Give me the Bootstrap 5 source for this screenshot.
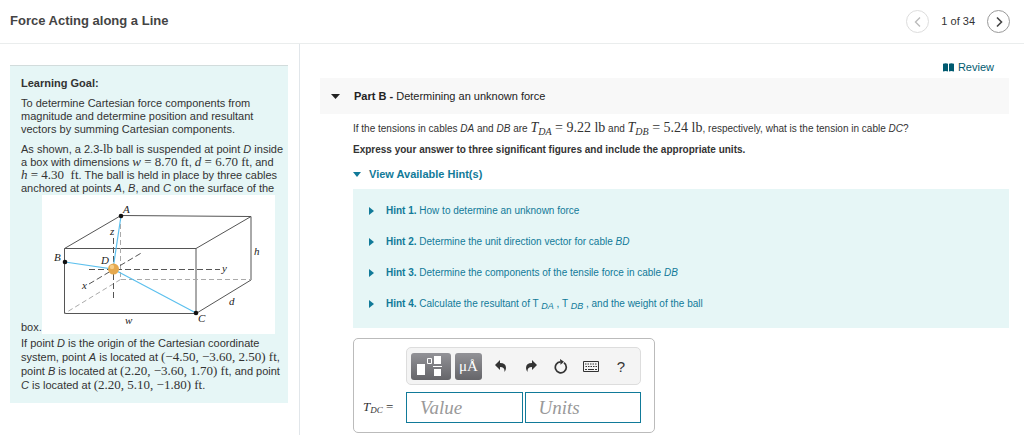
<!DOCTYPE html>
<html lang="en">
<head>
<meta charset="utf-8">
<meta name="viewport" content="width=device-width, initial-scale=1">
<title>Force Acting along a Line</title>
<link href="https://cdn.jsdelivr.net/npm/bootstrap@5.3.0/dist/css/bootstrap.min.css" rel="stylesheet">
<style>
body { font-family: "Liberation Sans", Arial, sans-serif; font-size: 11px; line-height: 13px; color: #333; background: #fff; }
a { text-decoration: none; color: #117a99; }
.topbar { height: 44px; border-bottom: 1px solid #eaeded; padding: 0 14px 0 10px; }
.topbar h1 { font-size: 13px; line-height: 16px; font-weight: 700; color: #444; margin: 0 0 2px; }
.pager { width: 23px; height: 23px; border: 1px solid #999; border-radius: 50%; background: #fff; color: #444; padding: 0; }
.pager:disabled { border-color: #ddd; color: #bbb; }
.sidebar { width: 300px; border-right: 1px solid #e1e6ea; padding: 21px 11px 16px 10px; }
.goal { background: #e6f6f6; border-top: 1px solid #d2dcdc; padding: 11px 8px 11px 11px; white-space: nowrap; }
.goal p { margin: 0 0 7px; }
.goal h2 { font-size: 11px; line-height: 13px; font-weight: 700; margin: 0 0 7px; }
.math { font-family: "Liberation Serif", "Times New Roman", serif; font-size: 13px; line-height: 0; }
.origin { line-height: 14px; padding-top: 2px; }
.figure-box { width: 233px; height: 139px; background: #fff; }
.work { padding: 16px 15px 0 20px; min-width: 0; }
.review { color: #005a70; padding-right: 15px; margin-bottom: 4px; line-height: 14px; }
.part { background: #f8f8f8; height: 36px; padding: 0 11px; font-size: 11px; margin-bottom: 7px; color: #222; }
.part svg { margin-right: 14px; }
.part-body { padding-left: 33px; }
.question { line-height: 16px; font-size: 10px; margin: 0 0 5px; }
.question .math { font-size: 14px; }
.instruct { font-size: 10px; line-height: 16px; font-weight: 700; margin: 0 0 8px; }
.toggle { font-size: 11px; line-height: 16px; font-weight: 700; margin-bottom: 7px; }
.hints { background: #e6f6f6; padding: 14px; margin-bottom: 10px; font-size: 10px; }
.hints li { height: 16px; margin-bottom: 15px; line-height: 16px; }
.hints li:last-child { margin-bottom: 2px; }
.hints sub, .math sub { font-size: 9px; }
.question .math sub { font-size: 10px; }
.hints svg { margin: 0 12px 0 2px; }
.answer { width: 302px; border: 1px solid #bbb; border-radius: 5px; padding: 8px 13px 9px 9px; }
.tools { background: #f4f4f4; border: 1px solid #ddd; border-radius: 5px; height: 38px; padding: 0 4px; margin-bottom: 7px; }
.tools button { border: 0; background: none; color: #333; padding: 0; height: 27px; width: 30px; line-height: 1; }
.tools button.dark { background: linear-gradient(#929297, #656569); border-radius: 3px; color: #fff; }
.tools button.templates { width: 40px; margin-right: 4px; }
.tools button.symbols { width: 27px; margin-right: 4px; font: 15px "Liberation Serif", serif; }
.tools button.help { font-size: 15px; }
.answer-label { width: 43px; font-size: 13px; }
.answer input { min-width: 0; height: 31px; border: 1px solid #117a99; background: #fff; border-radius: 0; padding: 0 13px; font: italic 19px "Liberation Serif", serif; color: #333; }
.answer input::placeholder { color: #999; opacity: 1; }
</style>
</head>
<body>
<div class="min-vh-100 d-flex flex-column">
<header class="topbar d-flex align-items-center justify-content-between">
  <h1>Force Acting along a Line</h1>
  <nav class="d-flex align-items-center gap-2" aria-label="Items">
    <button class="pager d-flex align-items-center justify-content-center" disabled aria-label="Previous"><svg width="10" height="12" viewBox="0 0 10 12" fill="none" stroke="currentColor" stroke-width="1.4"><path d="M7 1.5 2.5 6 7 10.5"/></svg></button>
    <span class="px-1">1 of 34</span>
    <button class="pager d-flex align-items-center justify-content-center" aria-label="Next"><svg width="10" height="12" viewBox="0 0 10 12" fill="none" stroke="currentColor" stroke-width="1.6"><path d="M3 1.5 7.5 6 3 10.5"/></svg></button>
  </nav>
</header>
<div class="d-flex flex-grow-1">
  <aside class="sidebar flex-shrink-0">
    <section class="goal">
      <h2>Learning Goal:</h2>
      <p>To determine Cartesian force components from<br>magnitude and determine position and resultant<br>vectors by summing Cartesian components.</p>
      <div>As shown, a 2.3-<span class="math">lb</span> ball is suspended at point <i>D</i> inside<br>a box with dimensions <span class="math"><i>w</i> = 8.70 ft</span>, <span class="math"><i>d</i> = 6.70 ft</span>, and<br><span class="math"><i>h</i> = 4.30&nbsp; ft</span>. The ball is held in place by three cables<br>anchored at points <i>A</i>, <i>B</i>, and <i>C</i> on the surface of the</div>
      <div class="d-flex align-items-end"><span>box.</span>
        <svg class="figure-box" viewBox="41 195 233 139" role="img" aria-label="Ball suspended in a box by three cables">
          <g fill="none" stroke="#555" stroke-width="1">
            <path d="M63.500 248.500H195V313.500H63.500ZM63.500 248.500 120 215.500 250 216.500 195 248.500M250 216.500V280L195 313.500"/>
            <path stroke="#aaa" stroke-dasharray="5 3" d="M119.500 216V279.500H250M119.500 279.500 63.500 313.500"/>
            <path stroke-dasharray="6 3" d="M88 269.500H219M112.500 238V301M88 284 142 252"/>
            <path stroke="#5cc0ee" stroke-width="1.200" d="M120 216 112 269 64 262M112 269 195 313"/>
          </g>
          <g fill="#111"><circle cx="120" cy="216" r="2.300"/><circle cx="64" cy="262" r="2.300"/><circle cx="195" cy="313" r="2.300"/></g>
          <circle cx="112.500" cy="269" r="5.500" fill="#e5a94f"/><circle cx="111" cy="267" r="2.200" fill="#f6cd88"/>
          <g font-family="Liberation Serif, serif" font-style="italic" font-size="11" fill="#222">
            <text x="122" y="213">A</text><text x="53" y="261">B</text><text x="197" y="322">C</text><text x="100" y="264">D</text><text x="109" y="235">z</text><text x="81" y="289">x</text><text x="221" y="272">y</text><text x="253" y="255">h</text><text x="228" y="305">d</text><text x="124" y="324">w</text>
          </g>
        </svg>
      </div>
      <div class="origin">If point <i>D</i> is the origin of the Cartesian coordinate<br>system, point <i>A</i> is located at <span class="math">(−4.50, −3.60, 2.50) ft</span>,<br>point <i>B</i> is located at <span class="math">(2.20, −3.60, 1.70) ft</span>, and point<br><i>C</i> is located at <span class="math">(2.20, 5.10, −1.80) ft</span>.</div>
    </section>
  </aside>
  <main class="work flex-grow-1">
    <div class="review d-flex justify-content-end"><a href="#" class="d-flex align-items-center gap-1 text-reset"><svg width="11" height="9" viewBox="0 0 11 9" fill="currentColor"><path d="M0 .8Q3-.3 5 .8V8.500Q3 7.500 0 8.500ZM6 .8Q8-.3 11 .8V8.500Q8 7.500 6 8.500Z"/></svg>Review</a></div>
    <div class="part d-flex align-items-center"><svg width="9" height="5"><path d="M0 0H9L4.500 5Z" fill="#222"/></svg><span><b>Part B -</b> Determining an unknown force</span></div>
    <div class="part-body">
      <p class="question">If the tensions in cables <i>DA</i> and <i>DB</i> are <span class="math"><i>T<sub>DA</sub></i> = 9.22 lb</span> and <span class="math"><i>T<sub>DB</sub></i> = 5.24 lb</span>, respectively, what is the tension in cable <i>DC</i>?</p>
      <p class="instruct">Express your answer to three significant figures and include the appropriate units.</p>
      <a class="toggle d-flex align-items-center" href="#"><svg class="me-2" width="8" height="5"><path d="M0 0H8L4 5Z" fill="currentColor"/></svg>View Available Hint(s)</a>
      <ul class="hints list-unstyled">
        <li><a href="#"><svg width="5" height="8"><path d="M0 0 5 4 0 8Z" fill="currentColor"/></svg><b>Hint 1.</b> How to determine an unknown force</a></li>
        <li><a href="#"><svg width="5" height="8"><path d="M0 0 5 4 0 8Z" fill="currentColor"/></svg><b>Hint 2.</b> Determine the unit direction vector for cable <i>BD</i></a></li>
        <li><a href="#"><svg width="5" height="8"><path d="M0 0 5 4 0 8Z" fill="currentColor"/></svg><b>Hint 3.</b> Determine the components of the tensile force in cable <i>DB</i></a></li>
        <li><a href="#"><svg width="5" height="8"><path d="M0 0 5 4 0 8Z" fill="currentColor"/></svg><b>Hint 4.</b> Calculate the resultant of T <sub><i>DA</i></sub> , T <sub><i>DB</i></sub> , and the weight of the ball</a></li>
      </ul>
      <form class="answer">
        <div class="d-flex"><div class="answer-label flex-shrink-0"></div>
          <div class="tools d-flex align-items-center flex-grow-1">
            <button type="button" class="dark templates" aria-label="Templates"><svg width="40" height="27" fill="#fff"><path d="M6 11H14V22H6ZM23 3H30V11H23ZM22 13H31V14H22ZM23 16H30V23H23Z"/><path fill="none" stroke="#fff" d="M16.500 5.500H20.500V10.500H16.500Z"/></svg></button>
            <button type="button" class="dark symbols">μÅ</button>
            <button type="button" aria-label="Undo"><svg width="12" height="13" viewBox="0 0 12 13"><path fill="currentColor" d="M0 5 5 0V3Q11 3 11 8 11 10 9.500 12 10 7 5 7V10Z"/></svg></button>
            <button type="button" aria-label="Redo"><svg width="12" height="13" viewBox="0 0 12 13"><path fill="currentColor" d="M12 5 7 0V3Q1 3 1 8 1 10 2.500 12 2 7 7 7V10Z"/></svg></button>
            <button type="button" aria-label="Reset"><svg width="14" height="15" viewBox="0 0 14 15"><path fill="none" stroke="currentColor" stroke-width="1.700" d="M10 3.800A5.500 5.500 0 1 1 6.500 2.800"/><path fill="currentColor" d="M6 0 10 2.800 6.500 5.800Z"/></svg></button>
            <button type="button" aria-label="Keyboard"><svg width="16" height="11" viewBox="0 0 16 11" fill="none" stroke="currentColor"><path d="M.5.5H15.500V10.500H.5Z"/><path stroke-dasharray="1.500 1" d="M2 3H14M2.500 5.500H14"/><path d="M2 8.500H4M5 8.500H11M12 8.500H14"/></svg></button>
            <button type="button" class="help">?</button>
          </div></div>
        <div class="d-flex align-items-center">
          <label class="answer-label math flex-shrink-0" for="val"><i>T<sub>DC</sub></i> =</label>
          <div class="d-flex flex-grow-1" style="gap:2px"><input class="w-50" id="val" placeholder="Value"><input class="w-50" id="unit" aria-label="Units" placeholder="Units"></div>
        </div>
      </form>
    </div>
  </main>
</div>
</div>
<script src="https://cdn.jsdelivr.net/npm/bootstrap@5.3.0/dist/js/bootstrap.bundle.min.js"></script>
</body>
</html>
